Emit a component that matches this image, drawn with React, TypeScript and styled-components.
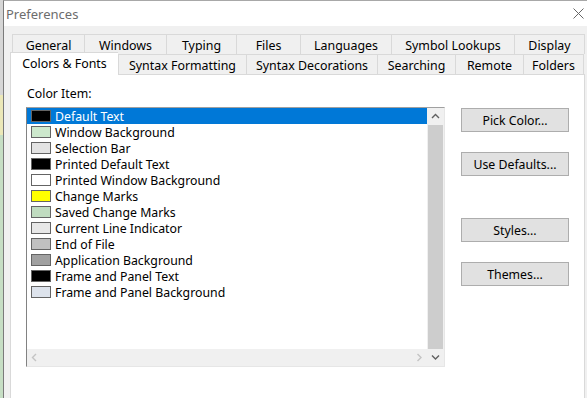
import styled, { createGlobalStyle } from "styled-components";

const GlobalStyle = createGlobalStyle`
  html, body { margin: 0; padding: 0; }
  body {
    font-family: "Noto Sans", "Open Sans", sans-serif;
    font-size: 12px;
    color: #000;
    overflow: hidden;
  }
`;

const Screen = styled.div`
  display: flex;
  width: 587px;
  height: 398px;
  overflow: hidden;
`;

const Desktop = styled.div`
  width: 3px;
  flex: none;
  background: linear-gradient(#d6d6d6 0, #d6d6d6 95px, #ece8b8 95px, #ece8b8 135px, #c6dec4 135px);
`;

const Window = styled.div`
  flex: 1;
  display: flex;
  flex-direction: column;
  border-left: 1px solid #7a7a7a;
  border-top: 1px solid #a8a8a8;
  background: #f0f0f0;
`;

const TitleBar = styled.div`
  height: 25px;
  flex: none;
  display: flex;
  align-items: center;
  justify-content: space-between;
  padding: 0 4px 0 2px;
  background: #fff;
`;

const Title = styled.span`
  font-size: 13px;
  color: #6d6d6d;
`;

const Body = styled.div`
  flex: 1;
  display: flex;
  flex-direction: column;
  padding: 8px 3px 0 6px;
  min-height: 0;
`;

const TabRow = styled.div<{ $indent: number }>`
  display: flex;
  height: 20px;
  margin-left: ${(p) => p.$indent}px;
  flex: none;
`;

const Tab = styled.div<{ $w: number; $active?: boolean }>`
  width: ${(p) => p.$w}px;
  box-sizing: border-box;
  display: flex;
  align-items: center;
  justify-content: center;
  border: 1px solid #d9d9d9;
  border-right: none;
  border-bottom: none;
  background: ${(p) => (p.$active ? "#fff" : "#f0f0f0")};
  font-size: 12.4px;
  white-space: nowrap;
  position: ${(p) => (p.$active ? "relative" : "static")};
  z-index: ${(p) => (p.$active ? 1 : 0)};
  height: ${(p) => (p.$active ? "23px" : "20px")};
  margin-top: ${(p) => (p.$active ? "-2px" : "0")};
  padding: ${(p) => (p.$active ? "0 0 1px" : "1px 0 0")};
  &:last-child {
    border-right: 1px solid #d9d9d9;
  }
`;

const Panel = styled.div`
  flex: 1;
  background: #fff;
  border: 1px solid #d9d9d9;
  border-bottom: none;
  display: flex;
  gap: 16px;
  padding: 10px 0 0 15px;
`;

const LeftColumn = styled.div`
  display: flex;
  flex-direction: column;
`;

const Label = styled.div`
  height: 16px;
  margin-bottom: 6px;
  padding-left: 1px;
  display: flex;
  align-items: center;
  font-size: 12.3px;
`;

const ListBox = styled.div`
  width: 419px;
  height: 260px;
  box-sizing: border-box;
  border: 1px solid;
  border-color: #a0a0a0 #e6e6e6 #e6e6e6 #828282;
  display: grid;
  grid-template-columns: 1fr 17px;
  grid-template-rows: 1fr 17px;
`;

const Items = styled.div`
  grid-column: 1;
  grid-row: 1;
  overflow: hidden;
`;

const Row = styled.div<{ $selected?: boolean }>`
  height: 16px;
  display: flex;
  align-items: center;
  background: ${(p) => (p.$selected ? "#0078d7" : "transparent")};
  color: ${(p) => (p.$selected ? "#fff" : "#000")};
  font-size: 12.3px;
  white-space: nowrap;
`;

const Swatch = styled.span<{ $color: string }>`
  width: 20px;
  height: 12px;
  box-sizing: border-box;
  margin: 0 4px 0 4px;
  background: ${(p) => p.$color};
  border: 1px solid #646464;
  flex: none;
`;

const VScroll = styled.div`
  grid-column: 2;
  grid-row: 1 / 3;
  display: flex;
  flex-direction: column;
  background: #f0f0f0;
`;

const ArrowBox = styled.div`
  height: 17px;
  flex: none;
  display: flex;
  align-items: center;
  justify-content: center;
`;

const Thumb = styled.div`
  flex: 1;
  margin: 0 1px;
  background: #cdcdcd;
`;

const HScroll = styled.div`
  grid-column: 1;
  grid-row: 2;
  background: #f0f0f0;
  display: flex;
  align-items: center;
  justify-content: space-between;
  padding: 0 4px;
`;

const ButtonColumn = styled.div`
  display: flex;
  flex-direction: column;
  padding-top: 23px;
`;

const Button = styled.div<{ $gap: number }>`
  width: 108px;
  height: 24px;
  box-sizing: border-box;
  margin-top: ${(p) => p.$gap}px;
  border: 1px solid #adadad;
  background: #e1e1e1;
  display: flex;
  align-items: center;
  justify-content: center;
  font-size: 12.3px;
`;

const Chevron = ({ dir, color }: { dir: "up" | "down" | "left" | "right"; color: string }) => {
  const pts = {
    up: "1,5 4.5,1.5 8,5",
    down: "1,1.5 4.5,5 8,1.5",
    left: "5,1 1.5,4.5 5,8",
    right: "1.5,1 5,4.5 1.5,8",
  }[dir];
  const vertical = dir === "up" || dir === "down";
  return (
    <svg width={vertical ? 9 : 7} height={vertical ? 7 : 9} viewBox={vertical ? "0 0 9 7" : "0 0 7 9"}>
      <polyline points={pts} fill="none" stroke={color} strokeWidth="1.4" />
    </svg>
  );
};

const tabsBack = [
  { label: "General", w: 72 },
  { label: "Windows", w: 82 },
  { label: "Typing", w: 70 },
  { label: "Files", w: 64 },
  { label: "Languages", w: 91 },
  { label: "Symbol Lookups", w: 123 },
  { label: "Display", w: 71 },
];

const tabsFront = [
  { label: "Colors & Fonts", w: 108, active: true },
  { label: "Syntax Formatting", w: 128 },
  { label: "Syntax Decorations", w: 131 },
  { label: "Searching", w: 78 },
  { label: "Remote", w: 68 },
  { label: "Folders", w: 61 },
];

const colorItems = [
  { name: "Default Text", color: "#000000" },
  { name: "Window Background", color: "#cce8cc" },
  { name: "Selection Bar", color: "#e3e3e3" },
  { name: "Printed Default Text", color: "#000000" },
  { name: "Printed Window Background", color: "#ffffff" },
  { name: "Change Marks", color: "#ffff00" },
  { name: "Saved Change Marks", color: "#c0dcc0" },
  { name: "Current Line Indicator", color: "#e8e8e8" },
  { name: "End of File", color: "#c0c0c0" },
  { name: "Application Background", color: "#a0a0a0" },
  { name: "Frame and Panel Text", color: "#000000" },
  { name: "Frame and Panel Background", color: "#dde3ec" },
];

const buttons = [
  { label: "Pick Color...", gap: 0 },
  { label: "Use Defaults...", gap: 20 },
  { label: "Styles...", gap: 42 },
  { label: "Themes...", gap: 20 },
];

export default function App() {
  return (
    <>
      <GlobalStyle />
      <Screen>
        <Desktop />
        <Window>
          <TitleBar>
            <Title>Preferences</Title>
            <svg width="11" height="11" viewBox="0 0 11 11">
              <path d="M0.5 0.5 L10.5 10.5 M10.5 0.5 L0.5 10.5" stroke="#666" strokeWidth="1" />
            </svg>
          </TitleBar>
          <Body>
            <TabRow $indent={2}>
              {tabsBack.map((t) => (
                <Tab key={t.label} $w={t.w}>
                  {t.label}
                </Tab>
              ))}
            </TabRow>
            <TabRow $indent={0}>
              {tabsFront.map((t) => (
                <Tab key={t.label} $w={t.w} $active={t.active}>
                  {t.label}
                </Tab>
              ))}
            </TabRow>
            <Panel>
              <LeftColumn>
                <Label>Color Item:</Label>
                <ListBox>
                  <Items>
                    {colorItems.map((c, i) => (
                      <Row key={c.name} $selected={i === 0}>
                        <Swatch $color={c.color} />
                        {c.name}
                      </Row>
                    ))}
                  </Items>
                  <HScroll>
                    <Chevron dir="left" color="#c4c4c4" />
                    <Chevron dir="right" color="#c4c4c4" />
                  </HScroll>
                  <VScroll>
                    <ArrowBox>
                      <Chevron dir="up" color="#606060" />
                    </ArrowBox>
                    <Thumb />
                    <ArrowBox>
                      <Chevron dir="down" color="#606060" />
                    </ArrowBox>
                  </VScroll>
                </ListBox>
              </LeftColumn>
              <ButtonColumn>
                {buttons.map((b) => (
                  <Button key={b.label} $gap={b.gap}>
                    {b.label}
                  </Button>
                ))}
              </ButtonColumn>
            </Panel>
          </Body>
        </Window>
      </Screen>
    </>
  );
}
